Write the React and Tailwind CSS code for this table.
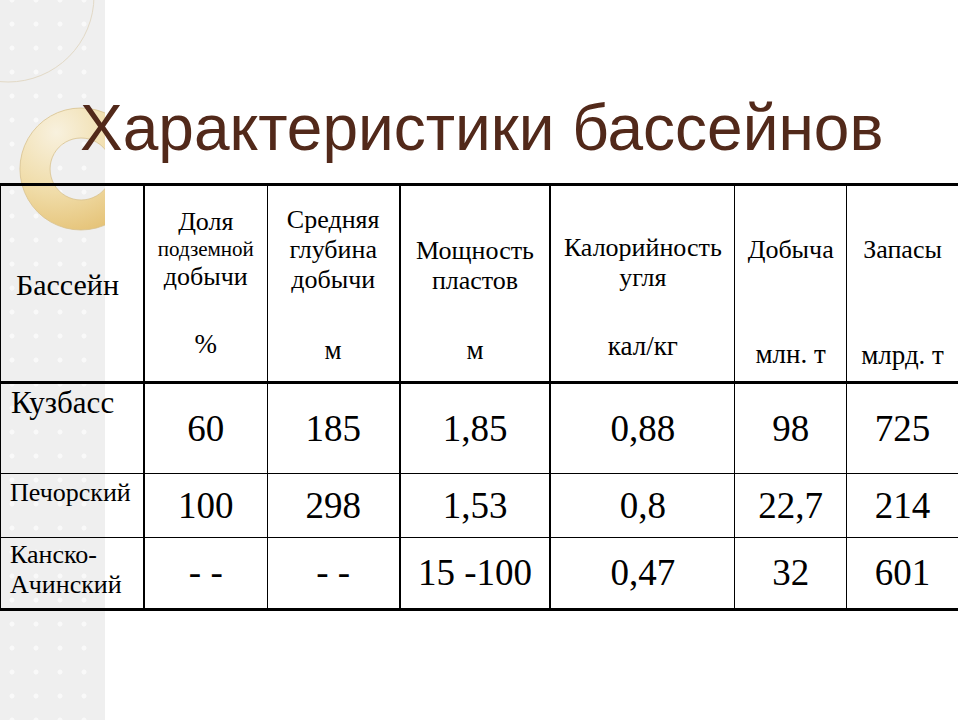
import React from "react";

const cols = [
  "w-[144px] border-r-2",
  "w-[123px] border-r",
  "w-[133px] border-r-2",
  "w-[151px] border-r-2",
  "w-[184px] border-r",
  "w-[112px] border-r",
  "w-[111px]",
];

const rows = [
  {
    name: "Кузбасс",
    nameClass: "pt-[3px] pl-[10px] text-[31px] leading-[32px]",
    h: "h-[90px] border-b",
    values: ["60", "185", "1,85", "0,88", "98", "725"],
  },
  {
    name: "Печорский",
    nameClass: "pt-[4px] pl-[9px] text-[26px] leading-[30px]",
    h: "h-[64px] border-b",
    values: ["100", "298", "1,53", "0,8", "22,7", "214"],
  },
  {
    name: (
      <>
        Канско-
        <br />
        Ачинский
      </>
    ),
    nameClass: "pt-[2px] pl-[9px] text-[26px] leading-[30px]",
    h: "h-[73px] border-b-[3px]",
    values: ["- -", "- -", "15 -100", "0,47", "32", "601"],
  },
];

function Decor() {
  return (
    <div className="absolute left-0 top-0 h-full w-[105px] overflow-hidden bg-[#efefef] bg-[radial-gradient(circle,#f9f9f9_2px,transparent_3px)] bg-[length:24px_24px] bg-[position:0px_12px]">
      <svg width="105" height="260" className="absolute left-0 top-0">
        <defs>
          <radialGradient id="gold" cx="0.3" cy="0.2" r="0.9">
            <stop offset="0" stopColor="#f8f1de" />
            <stop offset="0.55" stopColor="#f0dca8" />
            <stop offset="1" stopColor="#e4c072" />
          </radialGradient>
        </defs>
        <circle cx="8" cy="-4" r="86" fill="none" stroke="#e2d9c6" strokeWidth="1" />
        <path
          d="M81 108 A61 61 0 1 1 80.9 108 Z M81 138 A31 31 0 1 0 81.1 138 Z"
          fill="url(#gold)"
          fillRule="evenodd"
          stroke="#d8c28e"
          strokeWidth="0.8"
        />
      </svg>
    </div>
  );
}

function Head({ children, col, pt }) {
  return (
    <div
      className={`${cols[col]} h-[198px] border-b-[3px] border-black flex flex-col items-center text-center text-[26px] leading-[30px] ${pt}`}
    >
      {children}
    </div>
  );
}

export default function App() {
  return (
    <div className="relative w-[960px] h-[720px] overflow-hidden bg-white">
      <Decor />
      <div className="relative">
        <h1 className="pl-[80px] pt-[96px] text-[64px] leading-none font-normal text-[#52291a] font-['Liberation_Sans',Arial,sans-serif]">
          Характеристики бассейнов
        </h1>
        <div className="mt-[23px] w-[958px] border-t-[3px] border-l border-black font-['Liberation_Serif','Times_New_Roman',serif] text-black">
          <div className="flex">
            <div className={`${cols[0]} h-[198px] border-b-[3px] border-black flex items-center pl-[15px] pt-[2px] text-[30px]`}>
              Бассейн
            </div>
            <Head col={1} pt="pt-[21px]">
              <span>Доля</span>
              <span className="text-[21px] leading-[25px]">подземной</span>
              <span>добычи</span>
              <span className="mt-[37px] text-[27px]">%</span>
            </Head>
            <Head col={2} pt="pt-[19px]">
              <span>Средняя</span>
              <span>глубина</span>
              <span>добычи</span>
              <span className="mt-[40px] text-[27px]">м</span>
            </Head>
            <Head col={3} pt="pt-[50px]">
              <span>Мощность</span>
              <span>пластов</span>
              <span className="mt-[39px] text-[27px]">м</span>
            </Head>
            <Head col={4} pt="pt-[47px]">
              <span>Калорийность</span>
              <span>угля</span>
              <span className="mt-[38px] text-[27px]">кал/кг</span>
            </Head>
            <Head col={5} pt="pt-[49px]">
              <span>Добыча</span>
              <span className="mt-[74px] text-[27px]">млн. т</span>
            </Head>
            <Head col={6} pt="pt-[49px]">
              <span>Запасы</span>
              <span className="mt-[75px] text-[27px]">млрд. т</span>
            </Head>
          </div>
          {rows.map((r, i) => (
            <div key={i} className="flex">
              <div className={`${cols[0]} ${r.h} border-black ${r.nameClass}`}>{r.name}</div>
              {r.values.map((v, j) => (
                <div
                  key={j}
                  className={`${cols[j + 1]} ${r.h} border-black flex items-center justify-center text-[37px]`}
                >
                  {v}
                </div>
              ))}
            </div>
          ))}
        </div>
      </div>
    </div>
  );
}
